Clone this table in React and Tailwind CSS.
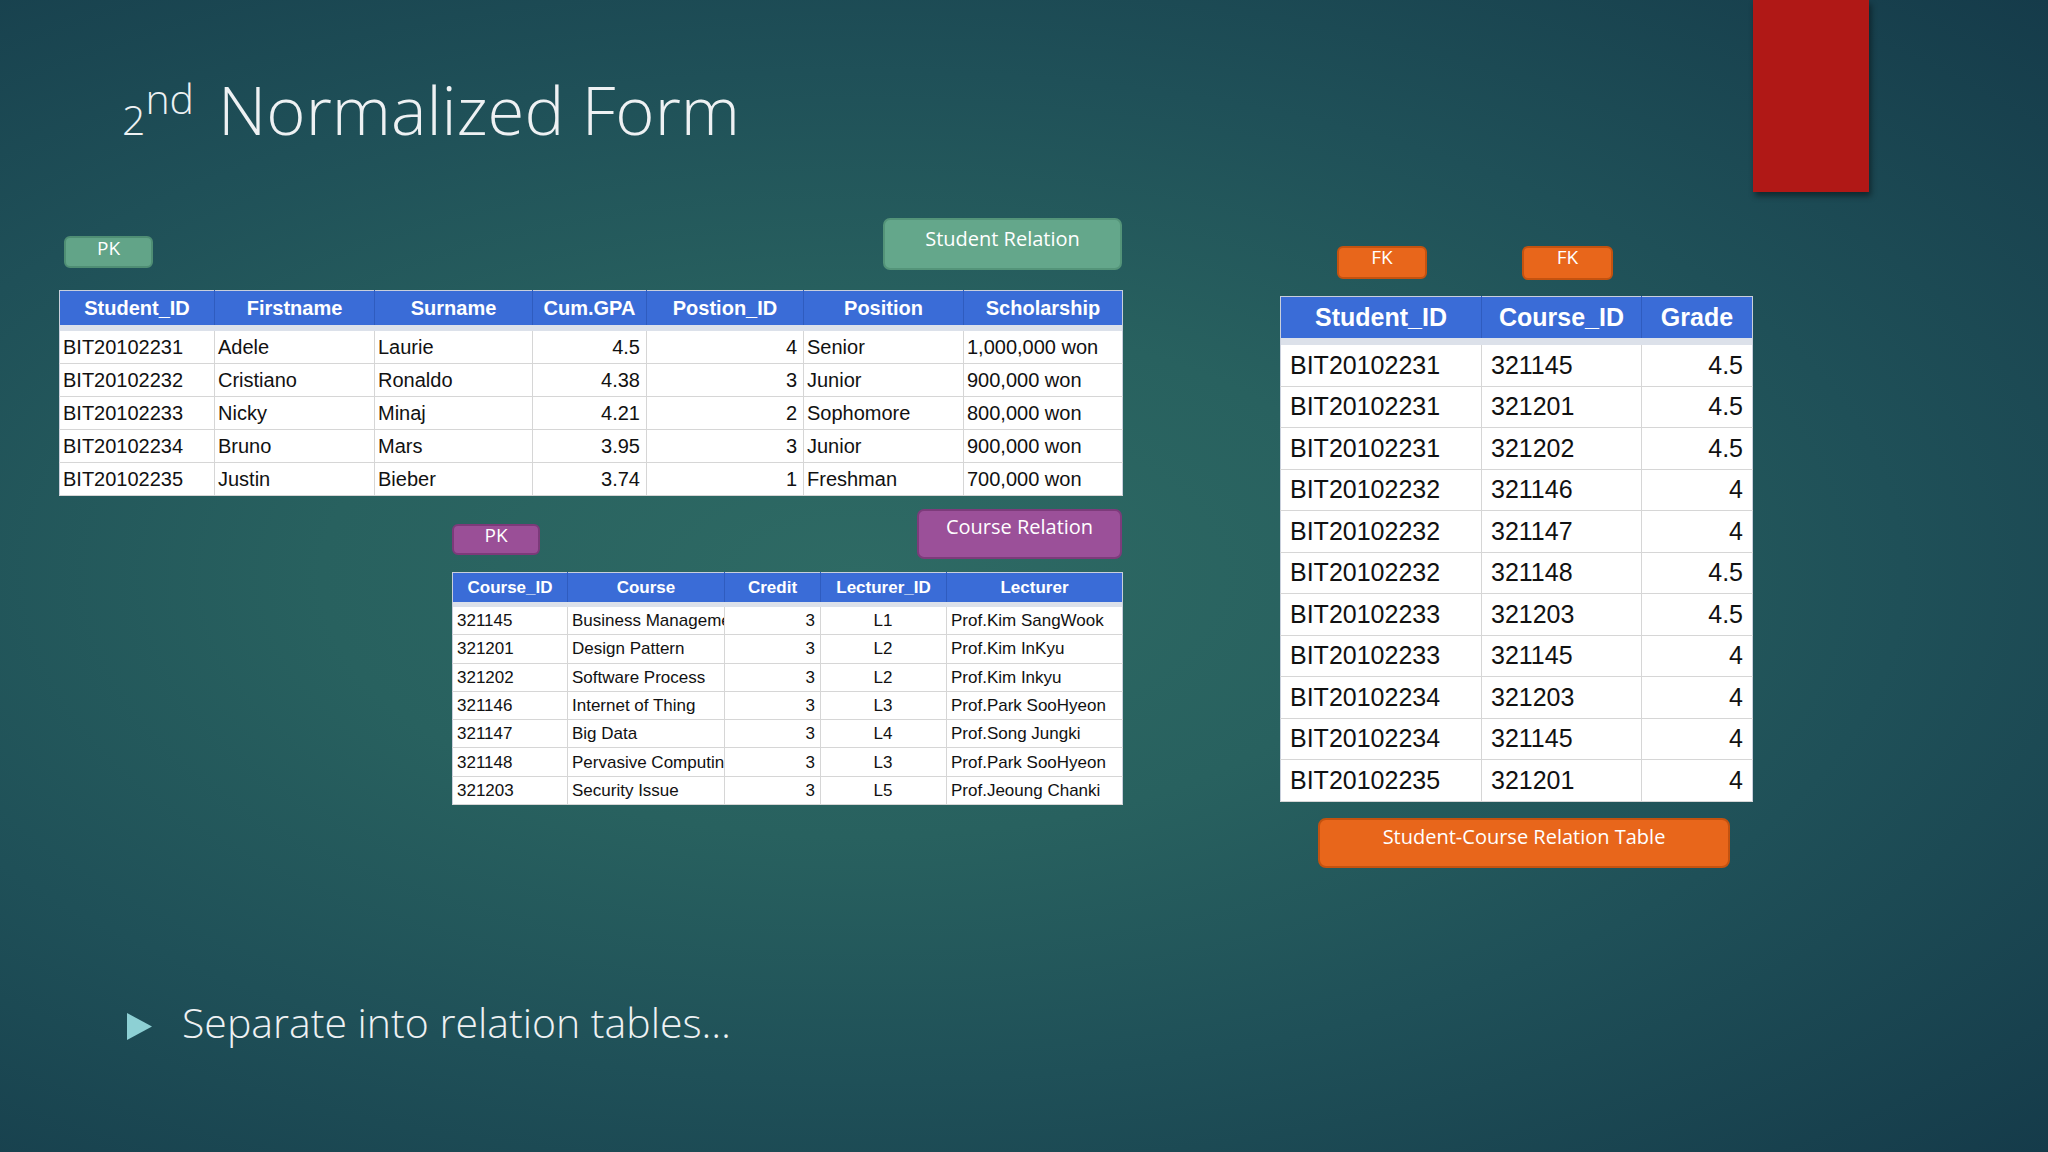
import React from 'react'

const studentCols = [
  { label: 'Student_ID', w: 'w-[155px]', align: 'text-left' },
  { label: 'Firstname', w: 'w-[160px]', align: 'text-left' },
  { label: 'Surname', w: 'w-[158px]', align: 'text-left' },
  { label: 'Cum.GPA', w: 'w-[114px]', align: 'text-right' },
  { label: 'Postion_ID', w: 'w-[157px]', align: 'text-right' },
  { label: 'Position', w: 'w-[160px]', align: 'text-left' },
  { label: 'Scholarship', w: 'w-[159px]', align: 'text-left' },
]

const studentRows = [
  ['BIT20102231', 'Adele', 'Laurie', '4.5', '4', 'Senior', '1,000,000 won'],
  ['BIT20102232', 'Cristiano', 'Ronaldo', '4.38', '3', 'Junior', '900,000 won'],
  ['BIT20102233', 'Nicky', 'Minaj', '4.21', '2', 'Sophomore', '800,000 won'],
  ['BIT20102234', 'Bruno', 'Mars', '3.95', '3', 'Junior', '900,000 won'],
  ['BIT20102235', 'Justin', 'Bieber', '3.74', '1', 'Freshman', '700,000 won'],
]

const courseCols = [
  { label: 'Course_ID', w: 'w-[115px]', align: 'text-left' },
  { label: 'Course', w: 'w-[157px]', align: 'text-left' },
  { label: 'Credit', w: 'w-[96px]', align: 'text-right' },
  { label: 'Lecturer_ID', w: 'w-[126px]', align: 'text-center' },
  { label: 'Lecturer', w: 'w-[176px]', align: 'text-left' },
]

const courseRows = [
  ['321145', 'Business Management', '3', 'L1', 'Prof.Kim SangWook'],
  ['321201', 'Design Pattern', '3', 'L2', 'Prof.Kim InKyu'],
  ['321202', 'Software Process', '3', 'L2', 'Prof.Kim Inkyu'],
  ['321146', 'Internet of Thing', '3', 'L3', 'Prof.Park SooHyeon'],
  ['321147', 'Big Data', '3', 'L4', 'Prof.Song Jungki'],
  ['321148', 'Pervasive Computing', '3', 'L3', 'Prof.Park SooHyeon'],
  ['321203', 'Security Issue', '3', 'L5', 'Prof.Jeoung Chanki'],
]

const gradeCols = [
  { label: 'Student_ID', w: 'w-[201px]', align: 'text-left' },
  { label: 'Course_ID', w: 'w-[160px]', align: 'text-left' },
  { label: 'Grade', w: 'w-[111px]', align: 'text-right' },
]

const gradeRows = [
  ['BIT20102231', '321145', '4.5'],
  ['BIT20102231', '321201', '4.5'],
  ['BIT20102231', '321202', '4.5'],
  ['BIT20102232', '321146', '4'],
  ['BIT20102232', '321147', '4'],
  ['BIT20102232', '321148', '4.5'],
  ['BIT20102233', '321203', '4.5'],
  ['BIT20102233', '321145', '4'],
  ['BIT20102234', '321203', '4'],
  ['BIT20102234', '321145', '4'],
  ['BIT20102235', '321201', '4'],
]

// sheet-style table pasted into the slide
function SheetTable({ cols, rows, width, headClass, bandClass, rowClass, cellPad }) {
  return (
    <table className={`table-fixed border-collapse bg-white border border-[#c9cfdc] font-['Liberation_Sans',Arial,sans-serif] ${width}`}>
      <colgroup>
        {cols.map((c) => <col key={c.label} className={c.w} />)}
      </colgroup>
      <thead>
        <tr className={headClass}>
          {cols.map((c) => (
            <th key={c.label} className="p-0 bg-[#3a6cd7] text-white font-bold text-center leading-none border-r border-[#2f5cbf] last:border-r-0 whitespace-nowrap">
              {c.label}
            </th>
          ))}
        </tr>
      </thead>
      <tbody>
        <tr className={bandClass}>
          <td colSpan={cols.length} className="p-0 bg-[#dce1ea]" />
        </tr>
        {rows.map((r, i) => (
          <tr key={i} className={rowClass}>
            {r.map((v, j) => (
              <td key={j} className={`py-0 ${cellPad} ${cols[j].align} leading-none text-[#111] whitespace-nowrap overflow-hidden border-r border-b border-[#d6d6d6] last:border-r-0`}>
                {v}
              </td>
            ))}
          </tr>
        ))}
      </tbody>
    </table>
  )
}

export default function App() {
  return (
    <div className="relative w-[2048px] h-[1152px] overflow-hidden pl-[59px] pt-[76px] font-['Open_Sans',sans-serif] bg-[radial-gradient(ellipse_at_42%_50%,#2e6a64_0%,#28615f_32%,#1f5058_62%,#153b4a_100%)]">
      {/* red accent block, top right */}
      <div className="absolute top-0 left-[1753px] w-[116px] h-[192px] bg-[#b01816] shadow-[2px_4px_6px_rgba(0,0,0,0.45)]" />

      {/* Title */}
      <h1 className="ml-[63px] h-[66px] leading-[66px] text-[#eef1f3] font-light whitespace-nowrap">
        <span className="text-[41px] leading-none">2</span>
        <span className="text-[41px] leading-none align-[21px]">nd</span>
        <span className="ml-[24px] text-[67px]">Normalized Form</span>
      </h1>

      <div className="mt-[76px] flex items-start gap-[158px]">
        {/* left: student + course relations */}
        <div className="w-[1063px] flex flex-col">
          <div className="flex items-start justify-between">
            <div className="ml-[5px] mt-[18px] w-[89px] h-[32px] rounded-[6px] bg-[#62a488] border-2 border-[#4f8e74] text-white text-[19px] leading-[20px] text-center">
              PK
            </div>
            <div className="w-[239px] h-[52px] rounded-[7px] bg-[#64a78b] border-2 border-[#549479] text-white text-[20px] leading-[24px] text-center pt-[7px]">
              Student Relation
            </div>
          </div>
          <div className="mt-[20px]">
            <SheetTable
              cols={studentCols}
              rows={studentRows}
              width="w-[1063px]"
              headClass="h-[34px] text-[20px]"
              bandClass="h-[6px]"
              rowClass="h-[33px] text-[20px]"
              cellPad="pl-[3px] pr-[6px]"
            />
          </div>

          <div className="ml-[393px] mt-[13px] w-[670px] flex flex-col">
            <div className="flex items-start justify-between">
              <div className="mt-[15px] w-[88px] h-[31px] rounded-[6px] bg-[#9a4f97] border-2 border-[#7c3a7a] text-white text-[19px] leading-[18px] text-center">
                PK
              </div>
              <div className="w-[205px] h-[50px] rounded-[7px] bg-[#9b5099] border-2 border-[#7d3b7b] text-white text-[20px] leading-[24px] text-center pt-[4px]">
                Course Relation
              </div>
            </div>
            <div className="mt-[13px]">
              <SheetTable
                cols={courseCols}
                rows={courseRows}
                width="w-[670px]"
                headClass="h-[29px] text-[17px]"
                bandClass="h-[5px]"
                rowClass="h-[28.3px] text-[17px]"
                cellPad="pl-[4px] pr-[5px]"
              />
            </div>
          </div>
        </div>

        {/* right: student-course relation */}
        <div className="mt-[28px] w-[473px] flex flex-col">
          <div className="flex items-start">
            <div className="ml-[57px] w-[90px] h-[33px] rounded-[6px] bg-[#e8661b] border-2 border-[#c4520f] text-white text-[19px] leading-[18px] text-center">
              FK
            </div>
            <div className="ml-[95px] w-[91px] h-[34px] rounded-[6px] bg-[#e8661b] border-2 border-[#c4520f] text-white text-[19px] leading-[18px] text-center">
              FK
            </div>
          </div>
          <div className="mt-[16px]">
            <SheetTable
              cols={gradeCols}
              rows={gradeRows}
              width="w-[473px]"
              headClass="h-[41px] text-[25px]"
              bandClass="h-[7px]"
              rowClass="h-[41.5px] text-[25px]"
              cellPad="px-[9px]"
            />
          </div>
          <div className="ml-[38px] mt-[16px] w-[412px] h-[50px] rounded-[8px] bg-[#e8661b] border-2 border-[#c4520f] text-white text-[20px] leading-[24px] text-center pt-[5px]">
            Student-Course Relation Table
          </div>
        </div>
      </div>

      {/* bullet */}
      <div className="mt-[130px] ml-[68px] flex items-start">
        <svg className="mt-[15px] shrink-0" width="25" height="27" viewBox="0 0 25 27">
          <polygon points="0,0 25,13.5 0,27" fill="#8dd0d4" />
        </svg>
        <p className="ml-[30px] text-[41px] leading-[48px] font-light text-[#eef1f3] whitespace-nowrap">
          Separate into relation tables…
        </p>
      </div>
    </div>
  )
}
